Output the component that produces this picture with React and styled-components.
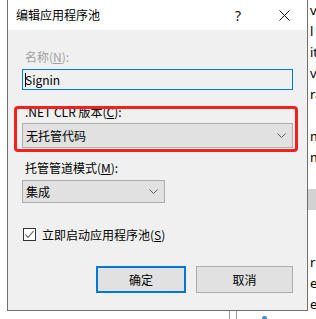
import React from 'react';
import styled, { createGlobalStyle } from 'styled-components';

const GlobalStyle = createGlobalStyle`
    html, body {
        margin: 0;
        padding: 0;
        background: #ffffff;
    }
    body {
        font-family: "Noto Sans CJK SC", "Noto Sans", sans-serif;
        font-size: 12px;
        color: #000;
    }
`;

const Screen = styled.div`
    width: 316px;
    height: 319px;
    overflow: hidden;
    display: flex;
    flex-direction: column;
    background: #fff;
`;

const TopArea = styled.div`
    display: flex;
    height: 311px;
`;

const Gutter = styled.div`
    width: 7px;
    flex-shrink: 0;
`;

const Dialog = styled.div`
    position: relative;
    width: 301px;
    flex-shrink: 0;
    display: flex;
    flex-direction: column;
    border: 1px solid #6f6f6f;
    border-top: none;
    box-sizing: border-box;
    background: #f0f0f0;
`;

const TitleBar = styled.div`
    height: 30px;
    display: flex;
    align-items: center;
    background: #fff;
`;

const Title = styled.div`
    flex: 1;
    padding-left: 8px;
    font-size: 12px;
    line-height: 16px;
`;

const TitleButton = styled.div`
    width: 46px;
    height: 30px;
    display: flex;
    align-items: center;
    justify-content: center;
    font-family: "Noto Sans", sans-serif;
    font-size: 14px;
    color: #111;
`;

const Body = styled.div`
    flex: 1;
    display: flex;
    flex-direction: column;
    padding: 0 14px;
`;

const Label = styled.div`
    height: 16px;
    line-height: 16px;
    padding-left: 3px;
    margin-top: ${p => p.$top}px;
    color: ${p => (p.$disabled ? '#a0a0a0' : '#000')};
    white-space: nowrap;
`;

const TextBox = styled.div`
    margin-top: 4px;
    height: 21px;
    box-sizing: border-box;
    border: 1px solid #0078d7;
    background: #f0f0f0;
    display: flex;
    align-items: center;
    padding-left: 2px;
    font-size: 12px;
`;

const Caret = styled.span`
    display: inline-block;
    width: 1px;
    height: 14px;
    background: #000;
    margin-right: -1px;
`;

const Select = styled.div`
    margin-top: ${p => p.$top}px;
    width: ${p => p.$width || 'auto'};
    height: ${p => p.$height}px;
    box-sizing: border-box;
    border: 1px solid #adadad;
    background: #e1e1e1;
    display: flex;
    align-items: center;
    justify-content: space-between;
    padding: 0 6px 0 3px;
`;

const CheckRow = styled.label`
    margin-top: 23px;
    height: 16px;
    display: flex;
    align-items: center;
    gap: 6px;
    padding-left: 1px;
`;

const CheckBox = styled.span`
    width: 13px;
    height: 13px;
    box-sizing: border-box;
    border: 1px solid #333;
    background: #fff;
    display: flex;
    align-items: center;
    justify-content: center;
`;

const ButtonRow = styled.div`
    margin-top: 24px;
    display: flex;
    justify-content: flex-end;
    gap: 10px;
`;

const Button = styled.div`
    width: ${p => p.$width}px;
    height: 27px;
    box-sizing: border-box;
    border: ${p => (p.$default ? '2px solid #0078d7' : '1px solid #adadad')};
    background: #e1e1e1;
    display: flex;
    align-items: center;
    justify-content: center;
`;

const Highlight = styled.div`
    position: absolute;
    left: 6px;
    top: 106px;
    width: 284px;
    height: 46px;
    box-sizing: border-box;
    border: 3px solid #f3201c;
    border-radius: 4px;
    pointer-events: none;
`;

const Backdrop = styled.div`
    flex: 1;
    display: flex;
    flex-direction: column;
    padding-left: 2px;
    font-family: "Noto Sans", sans-serif;
    font-size: 13px;
`;

const BackdropRow = styled.div`
    height: 21px;
    line-height: 21px;
    flex-shrink: 0;
    margin-left: ${p => (p.$selected ? '-2px' : '0')};
    background: ${p => (p.$selected ? '#d2d2d2' : 'transparent')};
    white-space: nowrap;
`;

const BottomStrip = styled.div`
    height: 8px;
    display: flex;
    align-items: flex-end;
`;

const VLine = styled.div`
    width: 1px;
    height: 8px;
    background: #9a9a9a;
    margin-left: ${p => p.$gap}px;
`;

const TinyIcon = styled.div`
    width: 5px;
    height: 3px;
    margin-left: 25px;
    background: #4a8fd0;
    border-radius: 2px 2px 0 0;
`;

function Chevron() {
    return (
        <svg width="9" height="5" viewBox="0 0 9 5">
            <path d="M0.5 0.5 L4.5 4.5 L8.5 0.5" fill="none" stroke="#606060" strokeWidth="1" />
        </svg>
    );
}

function CloseIcon() {
    return (
        <svg width="11" height="11" viewBox="0 0 11 11">
            <path d="M0.5 0.5 L10.5 10.5 M10.5 0.5 L0.5 10.5" stroke="#111" strokeWidth="1" />
        </svg>
    );
}

function Tick() {
    return (
        <svg width="11" height="11" viewBox="0 0 11 11">
            <path d="M1.5 5.5 L4 8.5 L9.5 2" fill="none" stroke="#555" strokeWidth="1.1" />
        </svg>
    );
}

const backdropRows = ['v', 'l', 'it', 'v', 'ra', '', 'm', 'm', '', '', '', '', 'r', 'ec', 'ec'];

export default function App() {
    return (
        <>
            <GlobalStyle />
            <Screen>
                <TopArea>
                    <Gutter />
                    <Dialog>
                        <TitleBar>
                            <Title>编辑应用程序池</Title>
                            <TitleButton>?</TitleButton>
                            <TitleButton><CloseIcon /></TitleButton>
                        </TitleBar>
                        <Body>
                            <Label $top={19} $disabled>名称(<u>N</u>):</Label>
                            <TextBox><Caret />Signin</TextBox>
                            <Label $top={14}>.NET CLR 版本(<u>C</u>):</Label>
                            <Select $top={3} $height={25}>
                                <span>无托管代码</span>
                                <Chevron />
                            </Select>
                            <Label $top={12}>托管管道模式(<u>M</u>):</Label>
                            <Select $top={4} $height={23} $width="143px">
                                <span>集成</span>
                                <Chevron />
                            </Select>
                            <CheckRow>
                                <CheckBox><Tick /></CheckBox>
                                <span>立即启动应用程序池(<u>S</u>)</span>
                            </CheckRow>
                            <ButtonRow>
                                <Button $width={90} $default>确定</Button>
                                <Button $width={97}>取消</Button>
                            </ButtonRow>
                        </Body>
                        <Highlight />
                    </Dialog>
                    <Backdrop>
                        {backdropRows.map((text, i) => (
                            <BackdropRow key={i} $selected={i === 9}>{text}</BackdropRow>
                        ))}
                    </Backdrop>
                </TopArea>
                <BottomStrip>
                    <VLine $gap={229} />
                    <VLine $gap={6} />
                    <TinyIcon />
                </BottomStrip>
            </Screen>
        </>
    );
}
